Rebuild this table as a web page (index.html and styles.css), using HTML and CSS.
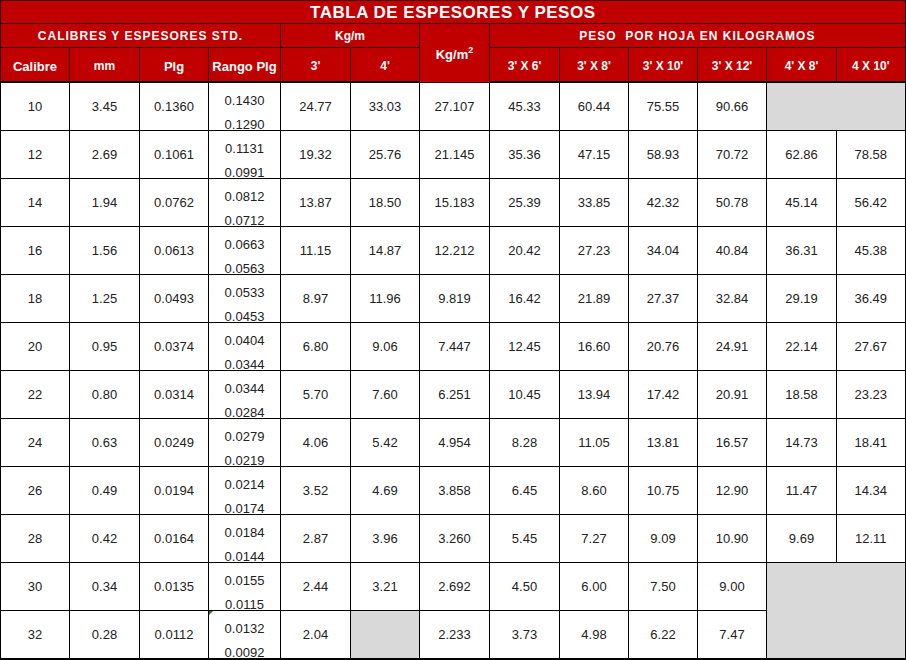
FILE: index.html
```html
<!DOCTYPE html>
<html lang="es">
<head>
<meta charset="utf-8">
<title>Tabla de espesores y pesos</title>
<link rel="stylesheet" href="styles.css">
</head>
<body>
<table class="sheet">
  <colgroup>
    <col class="c69"><col class="c70"><col class="c69"><col class="c72"><col class="c70"><col class="c69">
    <col class="c70"><col class="c70"><col class="c69"><col class="c69"><col class="c69"><col class="c70"><col class="c69">
  </colgroup>
  <thead>
    <tr class="h-title"><th colspan="13">TABLA DE ESPESORES Y PESOS</th></tr>
    <tr class="h-group">
      <th colspan="4" class="spaced">CALIBRES Y ESPESORES STD.</th>
      <th colspan="2">Kg/m</th>
      <th rowspan="2" class="kgm2">Kg/m<sup>2</sup></th>
      <th colspan="6" class="spaced">PESO&nbsp; POR HOJA EN KILOGRAMOS</th>
    </tr>
    <tr class="h-cols">
      <th class="big">Calibre</th><th>mm</th><th class="big">Plg</th><th class="big">Rango Plg</th>
      <th>3'</th><th>4'</th>
      <th>3' X 6'</th><th>3' X 8'</th><th>3' X 10'</th><th>3' X 12'</th><th>4' X 8'</th><th>4 X 10'</th>
    </tr>
  </thead>
  <tbody>
    <tr><td>10</td><td>3.45</td><td>0.1360</td><td class="rng"><div class="pair"><span>0.1430</span><span>0.1290</span></div></td><td>24.77</td><td>33.03</td><td>27.107</td><td>45.33</td><td>60.44</td><td>75.55</td><td>90.66</td><td colspan="2" class="na"></td></tr>
    <tr><td>12</td><td>2.69</td><td>0.1061</td><td class="rng"><div class="pair"><span>0.1131</span><span>0.0991</span></div></td><td>19.32</td><td>25.76</td><td>21.145</td><td>35.36</td><td>47.15</td><td>58.93</td><td>70.72</td><td>62.86</td><td>78.58</td></tr>
    <tr><td>14</td><td>1.94</td><td>0.0762</td><td class="rng"><div class="pair"><span>0.0812</span><span>0.0712</span></div></td><td>13.87</td><td>18.50</td><td>15.183</td><td>25.39</td><td>33.85</td><td>42.32</td><td>50.78</td><td>45.14</td><td>56.42</td></tr>
    <tr><td>16</td><td>1.56</td><td>0.0613</td><td class="rng"><div class="pair"><span>0.0663</span><span>0.0563</span></div></td><td>11.15</td><td>14.87</td><td>12.212</td><td>20.42</td><td>27.23</td><td>34.04</td><td>40.84</td><td>36.31</td><td>45.38</td></tr>
    <tr><td>18</td><td>1.25</td><td>0.0493</td><td class="rng"><div class="pair"><span>0.0533</span><span>0.0453</span></div></td><td>8.97</td><td>11.96</td><td>9.819</td><td>16.42</td><td>21.89</td><td>27.37</td><td>32.84</td><td>29.19</td><td>36.49</td></tr>
    <tr><td>20</td><td>0.95</td><td>0.0374</td><td class="rng"><div class="pair"><span>0.0404</span><span>0.0344</span></div></td><td>6.80</td><td>9.06</td><td>7.447</td><td>12.45</td><td>16.60</td><td>20.76</td><td>24.91</td><td>22.14</td><td>27.67</td></tr>
    <tr><td>22</td><td>0.80</td><td>0.0314</td><td class="rng"><div class="pair"><span>0.0344</span><span>0.0284</span></div></td><td>5.70</td><td>7.60</td><td>6.251</td><td>10.45</td><td>13.94</td><td>17.42</td><td>20.91</td><td>18.58</td><td>23.23</td></tr>
    <tr><td>24</td><td>0.63</td><td>0.0249</td><td class="rng"><div class="pair"><span>0.0279</span><span>0.0219</span></div></td><td>4.06</td><td>5.42</td><td>4.954</td><td>8.28</td><td>11.05</td><td>13.81</td><td>16.57</td><td>14.73</td><td>18.41</td></tr>
    <tr><td>26</td><td>0.49</td><td>0.0194</td><td class="rng"><div class="pair"><span>0.0214</span><span>0.0174</span></div></td><td>3.52</td><td>4.69</td><td>3.858</td><td>6.45</td><td>8.60</td><td>10.75</td><td>12.90</td><td>11.47</td><td>14.34</td></tr>
    <tr><td>28</td><td>0.42</td><td>0.0164</td><td class="rng"><div class="pair"><span>0.0184</span><span>0.0144</span></div></td><td>2.87</td><td>3.96</td><td>3.260</td><td>5.45</td><td>7.27</td><td>9.09</td><td>10.90</td><td>9.69</td><td>12.11</td></tr>
    <tr><td>30</td><td>0.34</td><td>0.0135</td><td class="rng"><div class="pair"><span>0.0155</span><span>0.0115</span></div></td><td>2.44</td><td>3.21</td><td>2.692</td><td>4.50</td><td>6.00</td><td>7.50</td><td>9.00</td><td colspan="2" rowspan="2" class="na"></td></tr>
    <tr><td>32</td><td>0.28</td><td>0.0112</td><td class="rng flagged"><div class="pair"><span>0.0132</span><span>0.0092</span></div></td><td>2.04</td><td class="na"></td><td>2.233</td><td>3.73</td><td>4.98</td><td>6.22</td><td>7.47</td></tr>
  </tbody>
</table>
</body>
</html>
```

FILE: styles.css
```css
html, body {
  margin: 0;
  padding: 0;
  background: #ffffff;
}

.sheet {
  border-collapse: collapse;
  table-layout: fixed;
  width: 905px;
  font-family: "Liberation Sans", Arial, sans-serif;
  border-right: 2px solid #000;
  border-bottom: 2px solid #000;
}

.c69 { width: 69px; }
.c70 { width: 70px; }
.c72 { width: 72px; }

.sheet th {
  background: #c00000;
  color: #ffffff;
  font-weight: bold;
  font-size: 12px;
  padding: 0;
  border: 1px solid #2a0505;
  text-align: center;
  white-space: nowrap;
}

.h-title th {
  height: 21px;
  font-size: 17px;
  letter-spacing: 0.5px;
  border-top: 1px solid #400;
  padding-top: 1px;
}

.h-group th {
  height: 23px;
}

.h-group .spaced {
  letter-spacing: 1px;
}

.h-group .kgm2 {
  font-size: 13px;
  padding-top: 4px;
}

.kgm2 sup {
  font-size: 9px;
  line-height: 0;
  vertical-align: 6px;
}

.h-cols th {
  height: 30px;
  padding-top: 3px;
  border-bottom: 2px solid #000;
}

.h-cols th.big {
  font-size: 13px;
}

.sheet td {
  height: 47px;
  padding: 0;
  border: 1px solid #000;
  text-align: center;
  vertical-align: middle;
  font-size: 13px;
  color: #222;
  position: relative;
}

.sheet td.na {
  background: #d9d9d9;
}

.pair {
  height: 47px;
  box-sizing: border-box;
  padding-top: 11px;
  display: flex;
  flex-direction: column;
  align-items: center;
  gap: 10px;
  overflow: visible;
}

.pair span {
  line-height: 14px;
}

.flagged::before {
  content: "";
  position: absolute;
  top: 0;
  left: 0;
  border-top: 4px solid #1e7b1e;
  border-right: 4px solid transparent;
}
```
